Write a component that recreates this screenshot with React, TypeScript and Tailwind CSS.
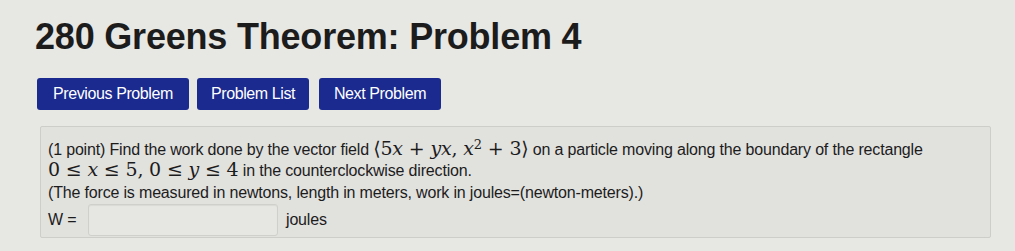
import React from "react";

const M = ({ children }: { children: React.ReactNode }) => (
  <span className="text-[19px] leading-none" style={{ fontFamily: '"DejaVu Serif", "Liberation Serif", serif' }}>{children}</span>
);
const I = ({ children }: { children: React.ReactNode }) => <i>{children}</i>;

export default function App() {
  return (
    <div className="w-[1015px] h-[251px] bg-[#e7e7e4] text-[#1c1c1c] overflow-hidden" style={{ fontFamily: '"Liberation Sans", Arial, sans-serif' }}>
      <div className="pl-[35px] pt-[17px]">
        <h1 className="text-[36px] font-bold leading-[40px] tracking-[-0.2px]">280 Greens Theorem: Problem 4</h1>
        <div className="flex gap-[8px] mt-[21px] ml-[2px]">
          <button className="h-[32px] w-[152px] rounded-[3px] bg-[#1a2a8e] text-white text-[16px] tracking-[-0.4px]">Previous Problem</button>
          <button className="h-[32px] w-[112px] rounded-[3px] bg-[#1a2a8e] text-white text-[16px] tracking-[-0.4px]">Problem List</button>
          <button className="h-[32px] w-[122px] ml-[2px] rounded-[3px] bg-[#1a2a8e] text-white text-[16px] tracking-[-0.4px]">Next Problem</button>
        </div>
        <div className="mt-[16px] ml-[5px] w-[951px] h-[112px] border border-[#cdcdca] bg-[#e1e1de] rounded-[2px] px-[7px] pt-[12px] text-[16px] leading-[20px] tracking-[-0.17px]">
          <div>
            (1 point) Find the work done by the vector field{" "}
            <M>⟨5<I>x</I> + <I>yx</I>, <I>x</I><sup className="text-[13px]">2</sup> + 3⟩</M> on a particle moving along the boundary of the rectangle
          </div>
          <div>
            <M>0 ≤ <I>x</I> ≤ 5, 0 ≤ <I>y</I> ≤ 4</M> in the counterclockwise direction.
          </div>
          <div className="mt-[2px]">(The force is measured in newtons, length in meters, work in joules=(newton-meters).)</div>
          <div className="flex items-center mt-[1px]">
            <span className="w-[40px]">W =</span>
            <div className="w-[190px] h-[32px] border border-[#cfcfcc] bg-[#e6e6e3] rounded-[3px] shadow-[inset_0_1px_1px_rgba(0,0,0,0.06)]" />
            <span className="ml-[8px]">joules</span>
          </div>
        </div>
      </div>
    </div>
  );
}
